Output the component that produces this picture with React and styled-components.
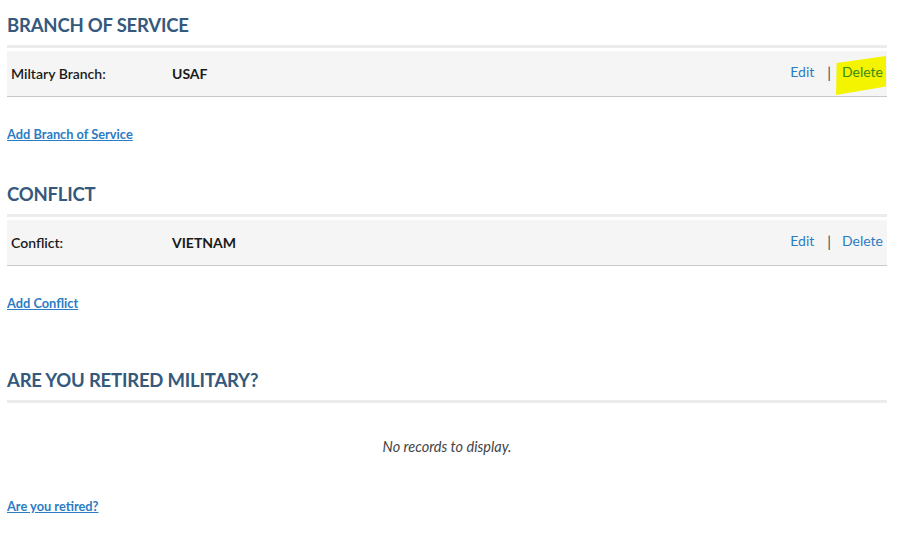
import React from 'react'
import styled, { createGlobalStyle } from 'styled-components'

const GlobalStyle = createGlobalStyle`
  body {
    margin: 0;
    background: #ffffff;
    font-family: Lato, "Open Sans", Arial, sans-serif;
  }
`

const Page = styled.div`
  width: 880px;
  padding: 0 0 0 7px;
`

const Section = styled.section`
  margin-top: ${({ $gap }) => $gap || 0}px;
`

const Heading = styled.h2`
  margin: 0;
  padding-top: 14px;
  font-size: 18.5px;
  line-height: 22px;
  font-weight: 700;
  color: #34597c;
  letter-spacing: -0.2px;
`

const Rule = styled.div`
  height: 3px;
  background: #ececec;
  margin-top: 9px;
`

const Row = styled.div`
  display: flex;
  align-items: center;
  height: 45px;
  margin-top: 3px;
  background: #f5f5f5;
  border-bottom: 1px solid #c8c8c8;
  padding: 0 0 0 4px;
  font-size: 14px;
  color: #1a1a1a;
`

const Label = styled.span`
  width: 161px;
  font-weight: 600;
`

const Value = styled.span`
  font-weight: 700;
  flex: 1;
`

const Actions = styled.div`
  display: flex;
  align-items: center;
  margin-top: -4px;
  margin-right: 4px;
`

const ActionLink = styled.a`
  position: relative;
  color: ${({ $marked }) => ($marked ? '#3b8a1c' : '#2b7cc3')};
  text-decoration: none;
  font-size: 14px;

  ${({ $marked }) =>
    $marked &&
    `
    &::before {
      content: '';
      position: absolute;
      left: -7px;
      right: -3px;
      top: -7px;
      bottom: -15px;
      background: #f4f400;
      clip-path: polygon(3% 18%, 100% 0%, 100% 78%, 2% 100%);
      z-index: 0;
    }
  `}
`

const LinkText = styled.span`
  position: relative;
`

const Pipe = styled.span`
  color: #3a4f66;
  margin: 0 11px 0 13px;
  font-size: 15px;
`

const AddLink = styled.a`
  display: inline-block;
  margin-top: ${({ $top }) => $top}px;
  font-size: 12.8px;
  line-height: 15px;
  font-weight: 700;
  color: #2b7cc3;
  text-decoration: underline;
  vertical-align: top;
`

const Empty = styled.div`
  text-align: center;
  font-style: italic;
  font-size: 14.5px;
  line-height: 17px;
  color: #444;
  margin-top: 35px;
`

function DataRow({ label, value, marked }) {
  return (
    <Row>
      <Label>{label}</Label>
      <Value>{value}</Value>
      <Actions>
        <ActionLink href="#"><LinkText>Edit</LinkText></ActionLink>
        <Pipe>|</Pipe>
        <ActionLink href="#" $marked={marked}><LinkText>Delete</LinkText></ActionLink>
      </Actions>
    </Row>
  )
}

export default function App() {
  return (
    <>
      <GlobalStyle />
      <Page>
        <Section>
          <Heading>BRANCH OF SERVICE</Heading>
          <Rule />
          <DataRow label="Miltary Branch:" value="USAF" marked />
          <AddLink href="#" $top={30}>Add Branch of Service</AddLink>
        </Section>
        <Section $gap={27}>
          <Heading>CONFLICT</Heading>
          <Rule />
          <DataRow label="Conflict:" value="VIETNAM" />
          <AddLink href="#" $top={30}>Add Conflict</AddLink>
        </Section>
        <Section $gap={44}>
          <Heading>ARE YOU RETIRED MILITARY?</Heading>
          <Rule />
          <Empty>No records to display.</Empty>
          <AddLink href="#" $top={44}>Are you retired?</AddLink>
        </Section>
      </Page>
    </>
  )
}
